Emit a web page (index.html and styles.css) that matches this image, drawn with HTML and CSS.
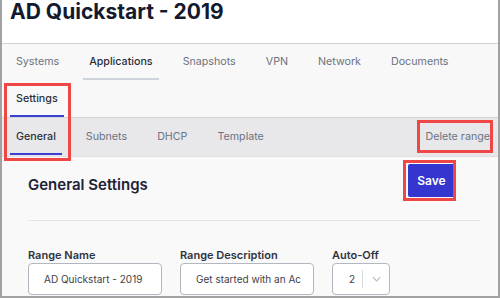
FILE: index.html
```html
<!DOCTYPE html>
<html lang="en">
<head>
  <meta charset="UTF-8">
  <meta name="viewport" content="width=device-width, initial-scale=1.0">
  <title>AD Quickstart - 2019</title>
  <link rel="stylesheet" href="styles.css">
</head>
<body>
  <div class="marco">
    <header class="cabecera">
      <h1>AD Quickstart - 2019</h1>
    </header>

    <nav class="pestanas">
      <a class="pestana">Systems</a>
      <a class="pestana activa-gris">Applications</a>
      <a class="pestana">Snapshots</a>
      <a class="pestana">VPN</a>
      <a class="pestana">Network</a>
      <a class="pestana">Documents</a>
    </nav>

    <nav class="pestanas fila-ajustes">
      <a class="pestana activa-azul">Settings</a>
    </nav>

    <nav class="pestanas subpestanas">
      <a class="pestana activa-azul">General</a>
      <a class="pestana">Subnets</a>
      <a class="pestana">DHCP</a>
      <a class="pestana">Template</a>
      <a class="borrar">Delete range</a>
    </nav>

    <section class="contenido">
      <div class="contenido-cabecera">
        <h2>General Settings</h2>
        <button class="guardar">Save</button>
      </div>

      <div class="campos">
        <div class="campo">
          <label>Range Name</label>
          <div class="entrada">AD Quickstart - 2019</div>
        </div>
        <div class="campo">
          <label>Range Description</label>
          <div class="entrada">Get started with an Ac</div>
        </div>
        <div class="campo">
          <label>Auto-Off</label>
          <div class="entrada selector">
            <span class="valor">2</span>
            <span class="separador"></span>
            <svg class="flecha" width="10" height="6" viewBox="0 0 10 6">
              <path d="M1 1l4 4 4-4" fill="none" stroke="#b8bcc4" stroke-width="1.3"/>
            </svg>
          </div>
        </div>
      </div>
    </section>

    <div class="marca marca-ajustes"></div>
    <div class="marca marca-borrar"></div>
    <div class="marca marca-guardar"></div>
  </div>
</body>
</html>
```

FILE: styles.css
```css
body {
  margin: 0;
  font-family: 'Inter', 'Liberation Sans', sans-serif;
  background: #fff;
  overflow: hidden;
}

.marco {
  position: relative;
  height: 298px;
  box-sizing: border-box;
  border: 2px solid #a2a2a2;
  border-top: none;
  background: #f8f8f8;
  overflow: hidden;
}

.cabecera {
  height: 43px;
  background: #fff;
  border-bottom: 1px solid #d2d2d2;
}

.cabecera h1 {
  margin: 0;
  padding-left: 8px;
  font-size: 21px;
  font-weight: 700;
  line-height: 24px;
  color: #141a2e;
}

.pestanas {
  display: flex;
  gap: 18px;
  padding-left: 8px;
}

.pestana {
  padding: 11px 6px 9px;
  font-size: 10.7px;
  line-height: 14px;
  color: #6b7280;
  border-bottom: 2px solid transparent;
}

.activa-gris {
  color: #2b2f38;
  font-weight: 500;
  border-bottom-color: #cfd4dc;
}

.fila-ajustes .pestana {
  padding-top: 12px;
}

.activa-azul {
  color: #2b2f38;
  font-weight: 500;
  border-bottom-color: #3a3fd6;
}

.subpestanas {
  background: #e8e8ea;
  border-top: 1px solid #d6d6d9;
  border-bottom: 1px solid #e0e0e3;
  padding-bottom: 1px;
  padding-right: 8px;
  align-items: flex-start;
}

.subpestanas .pestana {
  padding-top: 12px;
}

.borrar {
  margin-left: auto;
  padding-top: 12px;
  font-size: 10.7px;
  line-height: 14px;
  color: #6b7280;
}

.contenido {
  padding: 7px 18px 0 26px;
  background: #f9f9fa;
}

.contenido-cabecera {
  display: flex;
  align-items: flex-start;
  justify-content: space-between;
  padding-bottom: 23px;
  border-bottom: 1px solid #e2e5ec;
}

.contenido-cabecera h2 {
  margin: 11px 0 0;
  font-size: 15px;
  font-weight: 600;
  line-height: 20px;
  color: #1e2235;
}

.guardar {
  width: 47px;
  height: 33px;
  margin-right: 25px;
  border: none;
  border-radius: 2px;
  background: #3535cf;
  color: #fff;
  font-family: inherit;
  font-size: 12px;
  font-weight: 600;
}

.campos {
  display: grid;
  grid-template-columns: 134px 134px 58px;
  gap: 18px;
  padding-top: 27px;
}

.campo label {
  display: block;
  margin-bottom: 1px;
  font-size: 11px;
  font-weight: 600;
  line-height: 14px;
  color: #30343f;
}

.entrada {
  height: 32px;
  box-sizing: border-box;
  padding: 0 0 0 15px;
  border: 1px solid #b3b8c0;
  border-radius: 4px;
  background: #fff;
  font-size: 10px;
  line-height: 30px;
  color: #3d414a;
  white-space: nowrap;
  overflow: hidden;
}

.selector {
  display: flex;
  align-items: center;
  padding: 0 8px 0 16px;
}

.valor {
  width: 14px;
}

.separador {
  width: 1px;
  height: 18px;
  background: #d5d8dd;
}

.flecha {
  margin-left: 9px;
}

.marca {
  position: absolute;
  box-sizing: border-box;
  border: 3px solid #ef4646;
}

.marca-ajustes {
  left: 2px;
  top: 83px;
  width: 67px;
  height: 78px;
}

.marca-borrar {
  left: 415px;
  top: 120px;
  width: 76px;
  height: 33px;
}

.marca-guardar {
  left: 401px;
  top: 160px;
  width: 53px;
  height: 41px;
}
```
